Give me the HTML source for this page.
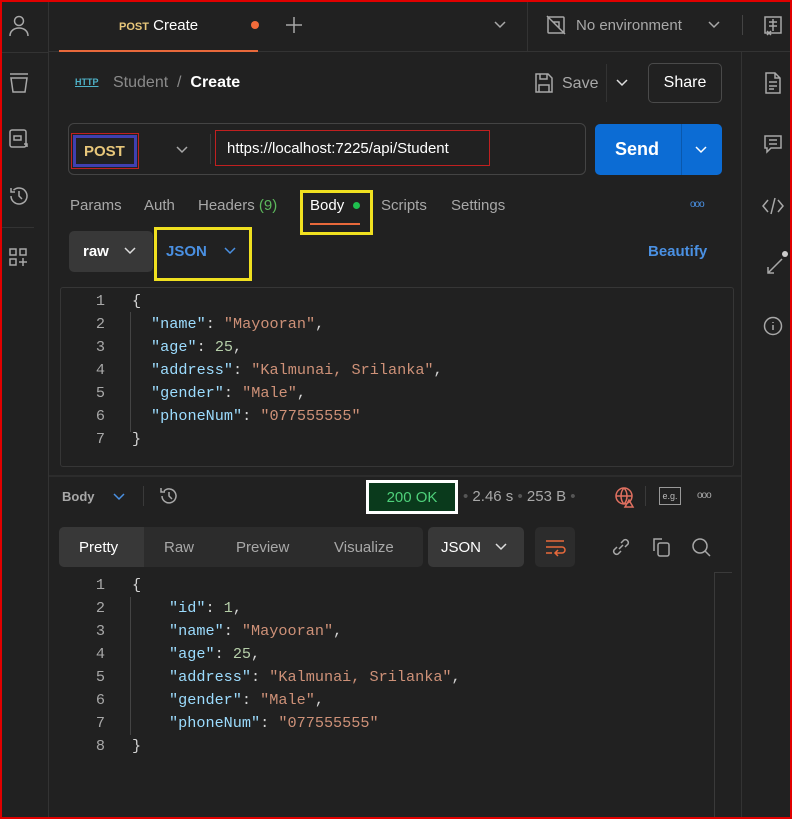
<!DOCTYPE html>
<html><head><meta charset="utf-8"><style>
*{margin:0;padding:0;box-sizing:border-box}
body{width:792px;height:819px;background:#212121;font-family:"Liberation Sans",sans-serif;color:#d0d0d0;position:relative;overflow:hidden}
.a{position:absolute}
.frame{position:absolute;left:0;top:0;width:792px;height:819px;border:2px solid #e00000;pointer-events:none;z-index:10}
.mono{font-family:"Liberation Mono",monospace;font-size:15.2px}
.ln{position:absolute;width:20px;text-align:right;color:#a8a8a8}
.k{color:#9cdcfe}.s{color:#ce9178}.n{color:#b5cea8}.p{color:#d4d4d4}
svg{position:absolute;fill:none;stroke:#a8a8a8;stroke-width:1.5}
.gray{color:#a8a8a8}
.t{position:absolute;top:197px;font-size:15px;color:#a8a8a8;white-space:nowrap}
</style></head><body>
<!-- left sidebar -->
<div class="a" style="left:48px;top:0;width:1px;height:819px;background:#333"></div>
<div class="a" style="left:2px;top:52px;width:46px;height:1px;background:#333"></div>
<div class="a" style="left:2px;top:227px;width:32px;height:1px;background:#333"></div>
<svg style="left:8px;top:14px" width="22" height="24" viewBox="0 0 22 24"><circle cx="11" cy="7" r="4.5"/><path d="M2 22c0-5 4-8 9-8s9 3 9 8"/></svg>
<svg style="left:8px;top:72px" width="22" height="22" viewBox="0 0 22 22"><path d="M2 2h18M3 6h16l-2 14H5z"/></svg>
<svg style="left:8px;top:128px" width="22" height="22" viewBox="0 0 22 22"><rect x="2" y="2" width="16" height="17" rx="2"/><rect x="6" y="8" width="7" height="4"/><path d="M16 16h3v3"/></svg>
<svg style="left:7px;top:184px" width="24" height="24" viewBox="0 0 24 24"><path d="M4 12a8 8 0 1 0 2.5-5.8M4 4v4h4M12 7v5l3 3"/></svg>
<svg style="left:8px;top:247px" width="22" height="22" viewBox="0 0 22 22"><rect x="2" y="2" width="6" height="6"/><rect x="12" y="2" width="6" height="6"/><rect x="2" y="12" width="6" height="6"/><path d="M15 11v8M11 15h8"/></svg>

<!-- top tab bar -->
<div class="a" style="left:49px;top:51px;width:741px;height:1px;background:#333"></div>
<div class="a" style="left:59px;top:50px;width:199px;height:2px;background:#e8693b"></div>
<div class="a" style="left:119px;top:17px;font-size:15px;color:#fff"><span style="color:#e8c77a;font-size:11px;font-weight:bold">POST</span> Create</div>
<div class="a" style="left:251px;top:21px;width:8px;height:8px;border-radius:50%;background:#f26b3a"></div>
<svg style="left:285px;top:16px" width="18" height="18" viewBox="0 0 18 18"><path d="M9 1v16M1 9h16"/></svg>
<svg style="left:494px;top:20px" width="12" height="10" viewBox="0 0 12 10"><path d="M1 2l5 5 5-5"/></svg>
<div class="a" style="left:527px;top:0;width:1px;height:51px;background:#333"></div>
<svg style="left:546px;top:15px" width="20" height="20" viewBox="0 0 20 20"><rect x="2" y="2" width="16" height="16" rx="1"/><path d="M1 1l18 18M7 7h6v6"/></svg>
<div class="a gray" style="left:576px;top:17px;font-size:15px">No environment</div>
<svg style="left:708px;top:20px" width="12" height="10" viewBox="0 0 12 10"><path d="M1 2l5 5 5-5"/></svg>
<div class="a" style="left:742px;top:15px;width:1px;height:20px;background:#444"></div>
<svg style="left:763px;top:15px" width="20" height="22" viewBox="0 0 20 22"><rect x="2" y="2" width="16" height="16"/><path d="M6 7h8M6 11h8M10 4v12M4 20l4-4M4 16l4 4"/></svg>

<!-- right sidebar -->
<div class="a" style="left:741px;top:52px;width:1px;height:767px;background:#333"></div>
<svg style="left:764px;top:72px" width="18" height="22" viewBox="0 0 18 22"><path d="M2 1h9l5 5v15H2zM11 1v5h5M5 10h8M5 14h8M5 17h5"/></svg>
<svg style="left:763px;top:134px" width="20" height="20" viewBox="0 0 20 20"><path d="M2 2h16v12H8l-4 4v-4H2zM6 6h8M6 10h8"/></svg>
<svg style="left:762px;top:197px" width="22" height="18" viewBox="0 0 22 18"><path d="M6 3L1 9l5 6M16 3l5 6-5 6M13 1L9 17"/></svg>
<svg style="left:764px;top:255px" width="22" height="22" viewBox="0 0 22 22"><path d="M4 18l7-7M4 12v6h6M11 11l7-7"/></svg>
<div class="a" style="left:782px;top:251px;width:6px;height:6px;border-radius:50%;background:#ccc"></div>
<svg style="left:763px;top:316px" width="20" height="20" viewBox="0 0 20 20"><circle cx="10" cy="10" r="8.5"/><path d="M10 9v5M10 6v1"/></svg>

<!-- breadcrumb -->
<div class="a" style="left:75px;top:77px;font-size:9px;color:#4fb3c9;font-weight:bold;text-decoration:underline">HTTP</div>
<div class="a" style="left:113px;top:74px;font-size:16px;color:#8a8a8a">Student &nbsp;/&nbsp; <span style="color:#fff;font-weight:bold">Create</span></div>
<svg style="left:534px;top:72px" width="20" height="22" viewBox="0 0 20 22"><path d="M2 2h12l4 4v14H2zM6 2v5h7V2M5 20v-7h10v7"/></svg>
<div class="a gray" style="left:562px;top:75px;font-size:16px">Save</div>
<div class="a" style="left:606px;top:64px;width:1px;height:38px;background:#333"></div>
<svg style="left:616px;top:78px" width="12" height="10" viewBox="0 0 12 10"><path d="M1 2l5 5 5-5" stroke="#ddd"/></svg>
<div class="a" style="left:648px;top:63px;width:74px;height:40px;border:1px solid #4a4a4a;border-radius:5px;color:#fff;font-size:16px;text-align:center;line-height:38px">Share</div>

<!-- url bar -->
<div class="a" style="left:68px;top:123px;width:518px;height:52px;border:1px solid #444;border-radius:6px"></div>
<div class="a" style="left:71px;top:133px;width:68px;height:36px;border:1px solid #c02020"></div>
<div class="a" style="left:73px;top:135px;width:64px;height:32px;border:3px solid #4040b0;color:#e8c77a;font-weight:bold;font-size:15px;line-height:27px;padding-left:8px">POST</div>
<svg style="left:176px;top:145px" width="12" height="10" viewBox="0 0 12 10"><path d="M1 2l5 5 5-5"/></svg>
<div class="a" style="left:210px;top:134px;width:1px;height:30px;background:#3a3a3a"></div>
<div class="a" style="left:215px;top:130px;width:275px;height:36px;border:1px solid #c02020;color:#fff;font-size:15px;line-height:36px;padding-left:11px">https://localhost:7225/api/Student</div>
<div class="a" style="left:595px;top:124px;width:127px;height:51px;background:#0c6cd4;border-radius:5px"></div>
<div class="a" style="left:681px;top:124px;width:1px;height:51px;background:#0a58ad"></div>
<div class="a" style="left:615px;top:139px;font-size:18px;font-weight:bold;color:#fff">Send</div>
<svg style="left:695px;top:145px" width="12" height="10" viewBox="0 0 12 10"><path d="M1 2l5 5 5-5" stroke="#fff"/></svg>

<!-- tabs -->
<div class="t" style="left:70px">Params</div>
<div class="t" style="left:144px">Auth</div>
<div class="t" style="left:198px">Headers <span style="color:#5cb85c">(9)</span></div>
<div class="a" style="left:300px;top:190px;width:73px;height:45px;border:3px solid #f0e020"></div>
<div class="t" style="left:310px;color:#fff">Body</div>
<div class="a" style="left:353px;top:202px;width:7px;height:7px;border-radius:50%;background:#1fbf4f"></div>
<div class="a" style="left:310px;top:223px;width:50px;height:2px;background:#e8693b"></div>
<div class="t" style="left:381px">Scripts</div>
<div class="t" style="left:451px">Settings</div>
<div class="a" style="left:690px;top:199px;font-size:10px;color:#4a90e2;letter-spacing:-1px">ooo</div>

<!-- raw / json -->
<div class="a" style="left:69px;top:231px;width:84px;height:41px;background:#383838;border-radius:5px"></div>
<div class="a" style="left:83px;top:243px;font-size:15px;color:#fff;font-weight:bold">raw</div>
<svg style="left:124px;top:246px" width="12" height="10" viewBox="0 0 12 10"><path d="M1 2l5 5 5-5" stroke="#ddd"/></svg>
<div class="a" style="left:154px;top:227px;width:98px;height:54px;border:3px solid #f0e020"></div>
<div class="a" style="left:166px;top:243px;font-size:15px;color:#4a90e2;font-weight:bold">JSON</div>
<svg style="left:224px;top:246px" width="12" height="10" viewBox="0 0 12 10"><path d="M1 2l5 5 5-5" stroke="#4a90e2"/></svg>
<div class="a" style="left:648px;top:243px;font-size:15px;color:#4a90e2;font-weight:bold">Beautify</div>

<!-- request editor -->
<div class="a" style="left:60px;top:287px;width:674px;height:180px;border:1px solid #363636;border-radius:3px"></div>
<div class="a" style="left:130px;top:312px;width:1px;height:120px;background:#444"></div>
<div class="mono" style="position:absolute;left:0;top:290px;line-height:23px">
<div style="position:relative;height:23px"><span class="ln" style="left:85px">1</span><span class="a p" style="left:132px">{</span></div>
<div style="position:relative;height:23px"><span class="ln" style="left:85px">2</span><span class="a" style="left:151px;white-space:pre"><span class="k">"name"</span><span class="p">: </span><span class="s">"Mayooran"</span><span class="p">,</span></span></div>
<div style="position:relative;height:23px"><span class="ln" style="left:85px">3</span><span class="a" style="left:151px;white-space:pre"><span class="k">"age"</span><span class="p">: </span><span class="n">25</span><span class="p">,</span></span></div>
<div style="position:relative;height:23px"><span class="ln" style="left:85px">4</span><span class="a" style="left:151px;white-space:pre"><span class="k">"address"</span><span class="p">: </span><span class="s">"Kalmunai, Srilanka"</span><span class="p">,</span></span></div>
<div style="position:relative;height:23px"><span class="ln" style="left:85px">5</span><span class="a" style="left:151px;white-space:pre"><span class="k">"gender"</span><span class="p">: </span><span class="s">"Male"</span><span class="p">,</span></span></div>
<div style="position:relative;height:23px"><span class="ln" style="left:85px">6</span><span class="a" style="left:151px;white-space:pre"><span class="k">"phoneNum"</span><span class="p">: </span><span class="s">"077555555"</span></span></div>
<div style="position:relative;height:23px"><span class="ln" style="left:85px">7</span><span class="a p" style="left:132px">}</span></div>
</div>
<div class="a" style="left:49px;top:475px;width:692px;height:2px;background:#2c2c2c"></div>

<!-- response bar -->
<div class="a gray" style="left:62px;top:489px;font-size:13px;font-weight:bold">Body</div>
<svg style="left:113px;top:492px" width="12" height="10" viewBox="0 0 12 10"><path d="M1 2l5 5 5-5" stroke="#4a90e2"/></svg>
<div class="a" style="left:143px;top:486px;width:1px;height:20px;background:#3a3a3a"></div>
<svg style="left:158px;top:485px" width="22" height="22" viewBox="0 0 22 22"><path d="M4 11a7 7 0 1 0 2-5M3 3v4h4M11 7v4l3 3"/></svg>
<div class="a" style="left:366px;top:480px;width:92px;height:34px;border:3px solid #fff;background:#0a3a1c;color:#4ed07a;font-size:15px;text-align:center;line-height:29px">200 OK</div>
<div class="a gray" style="left:463px;top:488px;font-size:15px;white-space:nowrap"><span style="color:#555">•</span> 2.46 s <span style="color:#555">•</span> 253 B <span style="color:#555">•</span></div>
<svg style="left:614px;top:486px" width="22" height="22" viewBox="0 0 22 22"><circle cx="10" cy="10" r="8" stroke="#e07060"/><path d="M2 10h16M10 2c-4 4-4 12 0 16M10 2c4 4 4 12 0 16M15 14l4 7h-8z" stroke="#e07060"/></svg>
<div class="a" style="left:645px;top:486px;width:1px;height:20px;background:#3a3a3a"></div>
<div class="a" style="left:659px;top:487px;width:22px;height:18px;border:1px solid #999;font-size:9px;color:#bbb;text-align:center;line-height:16px">e.g.</div>
<div class="a gray" style="left:697px;top:490px;font-size:10px;letter-spacing:-1px">ooo</div>

<div class="a" style="left:59px;top:527px;width:364px;height:40px;background:#2c2c2c;border-radius:5px"></div>
<div class="a" style="left:59px;top:527px;width:85px;height:40px;background:#383838;border-radius:5px 0 0 5px"></div>
<div class="a" style="left:79px;top:539px;font-size:15px;color:#fff">Pretty</div>
<div class="a gray" style="left:164px;top:539px;font-size:15px">Raw</div>
<div class="a gray" style="left:236px;top:539px;font-size:15px">Preview</div>
<div class="a gray" style="left:334px;top:539px;font-size:15px">Visualize</div>
<div class="a" style="left:428px;top:527px;width:96px;height:40px;background:#383838;border-radius:5px"></div>
<div class="a" style="left:441px;top:539px;font-size:15px;color:#fff">JSON</div>
<svg style="left:495px;top:542px" width="12" height="10" viewBox="0 0 12 10"><path d="M1 2l5 5 5-5" stroke="#ddd"/></svg>
<div class="a" style="left:535px;top:527px;width:40px;height:40px;background:#2c2c2c;border-radius:5px"></div>
<svg style="left:544px;top:536px" width="22" height="22" viewBox="0 0 22 22"><path d="M2 5h18M2 11h16a3 3 0 0 1 0 6h-6M14 14l-3 3 3 3M2 17h6" stroke="#e8693b"/></svg>
<svg style="left:610px;top:536px" width="22" height="22" viewBox="0 0 22 22"><path d="M9 13l4-4M7 11l-3 3a3 3 0 0 0 4 4l3-3M15 11l3-3a3 3 0 0 0-4-4l-3 3"/></svg>
<svg style="left:650px;top:536px" width="22" height="22" viewBox="0 0 22 22"><path d="M4 15V3h8"/><rect x="8" y="7" width="11" height="13" rx="2"/></svg>
<svg style="left:690px;top:536px" width="22" height="22" viewBox="0 0 22 22"><circle cx="10" cy="10" r="7"/><path d="M15 15l5 5"/></svg>

<!-- response code -->
<div class="a" style="left:714px;top:572px;width:1px;height:247px;background:#3a3a3a"></div>
<div class="a" style="left:714px;top:572px;width:18px;height:1px;background:#3a3a3a"></div>
<div class="a" style="left:130px;top:597px;width:1px;height:138px;background:#444"></div>
<div class="mono" style="position:absolute;left:0;top:574px;line-height:23px">
<div style="position:relative;height:23px"><span class="ln" style="left:85px">1</span><span class="a p" style="left:132px">{</span></div>
<div style="position:relative;height:23px"><span class="ln" style="left:85px">2</span><span class="a" style="left:169px;white-space:pre"><span class="k">"id"</span><span class="p">: </span><span class="n">1</span><span class="p">,</span></span></div>
<div style="position:relative;height:23px"><span class="ln" style="left:85px">3</span><span class="a" style="left:169px;white-space:pre"><span class="k">"name"</span><span class="p">: </span><span class="s">"Mayooran"</span><span class="p">,</span></span></div>
<div style="position:relative;height:23px"><span class="ln" style="left:85px">4</span><span class="a" style="left:169px;white-space:pre"><span class="k">"age"</span><span class="p">: </span><span class="n">25</span><span class="p">,</span></span></div>
<div style="position:relative;height:23px"><span class="ln" style="left:85px">5</span><span class="a" style="left:169px;white-space:pre"><span class="k">"address"</span><span class="p">: </span><span class="s">"Kalmunai, Srilanka"</span><span class="p">,</span></span></div>
<div style="position:relative;height:23px"><span class="ln" style="left:85px">6</span><span class="a" style="left:169px;white-space:pre"><span class="k">"gender"</span><span class="p">: </span><span class="s">"Male"</span><span class="p">,</span></span></div>
<div style="position:relative;height:23px"><span class="ln" style="left:85px">7</span><span class="a" style="left:169px;white-space:pre"><span class="k">"phoneNum"</span><span class="p">: </span><span class="s">"077555555"</span></span></div>
<div style="position:relative;height:23px"><span class="ln" style="left:85px">8</span><span class="a p" style="left:132px">}</span></div>
</div>

<div class="frame"></div>
</body></html>
